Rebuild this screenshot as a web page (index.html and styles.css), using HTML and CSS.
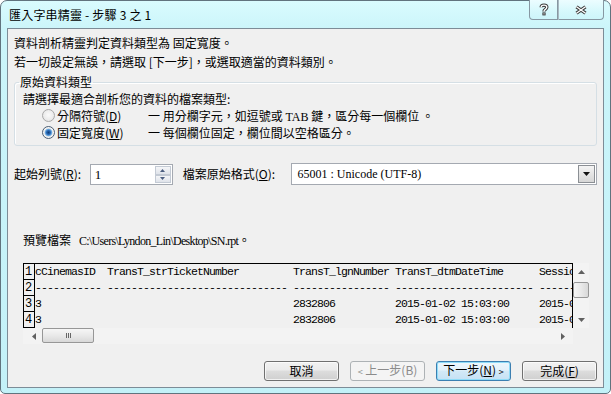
FILE: index.html
```html
<!DOCTYPE html>
<html lang="zh-Hant">
<head>
  <meta charset="UTF-8">
  <meta name="viewport" content="width=device-width, initial-scale=1.0">
  <title>匯入字串精靈 - 步驟 3 之 1</title>
  <link rel="stylesheet" href="styles.css">
</head>
<body>
  <div class="window">
    <div class="titlebar">
      <span class="title">匯入字串精靈 - 步驟 3 之 1</span>
      <div class="caption">
        <div class="cap-btn cap-help">
          <svg width="10" height="13" viewBox="0 0 10 13">
            <path class="edge" d="M2.2 4.3 C2.2 1.4 7.8 1.4 7.8 4.3 C7.8 6.4 5 6.3 5 8.4" />
            <path class="fill" d="M2.2 4.3 C2.2 1.4 7.8 1.4 7.8 4.3 C7.8 6.4 5 6.3 5 8.4" />
            <rect x="3.4" y="9.4" width="3.2" height="3" fill="#3b3b3b" />
            <rect x="4.4" y="10.4" width="1.2" height="1" fill="#fff" />
          </svg>
        </div>
        <div class="cap-btn cap-close">
          <svg width="14" height="10" viewBox="0 0 14 10">
            <path class="edge" d="M2.5 1.8 L11.5 8.2 M11.5 1.8 L2.5 8.2" />
            <path class="fill" d="M2.5 1.8 L11.5 8.2 M11.5 1.8 L2.5 8.2" />
          </svg>
        </div>
      </div>
    </div>

    <div class="client">
      <p class="line">資料剖析精靈判定資料類型為 固定寬度。</p>
      <p class="line">若一切設定無誤，請選取 [下一步]，或選取適當的資料類別。</p>

      <fieldset class="group">
        <legend>原始資料類型</legend>
        <div class="hint">請選擇最適合剖析您的資料的檔案類型:</div>
        <div class="radio-row">
          <span class="radio"></span>
          <span class="radio-label">分隔符號(<u>D</u>)</span>
          <span class="radio-desc">一 用分欄字元，如逗號或 <span class="latin">TAB</span> 鍵，區分每一個欄位 。</span>
        </div>
        <div class="radio-row">
          <span class="radio checked"></span>
          <span class="radio-label">固定寬度(<u>W</u>)</span>
          <span class="radio-desc">一 每個欄位固定，欄位間以空格區分。</span>
        </div>
      </fieldset>

      <div class="options">
        <span class="opt-label start-label">起始列號(<u>R</u>):</span>
        <div class="spinner">
          <span class="spin-value">1</span>
          <div class="spin-btns">
            <span class="spin"><svg width="5" height="3" viewBox="0 0 5 3"><polygon points="0,3 5,3 2.5,0" /></svg></span>
            <span class="spin"><svg width="5" height="3" viewBox="0 0 5 3"><polygon points="0,0 5,0 2.5,3" /></svg></span>
          </div>
        </div>
        <span class="opt-label origin-label">檔案原始格式(<u>O</u>):</span>
        <div class="combo">
          <span class="combo-value">65001 : Unicode (UTF-8)</span>
          <span class="combo-btn"><svg width="7" height="4" viewBox="0 0 7 4"><polygon points="0,0 7,0 3.5,4" /></svg></span>
        </div>
      </div>

      <div class="preview-title">預覽檔案<span class="latin path">C:\Users\Lyndon_Lin\Desktop\SN.rpt</span>。</div>

      <div class="preview">
        <div class="data">
          <div class="row"><span class="num">1</span><span class="cells">cCinemasID  TransT_strTicketNumber         TransT_lgnNumber TransT_dtmDateTime      SessionID</span></div>
          <div class="row"><span class="num">2</span><span class="cells">----------- ------------------------------ ---------------- ----------------------- ----------</span></div>
          <div class="row"><span class="num">3</span><span class="cells">3                                          2832806          2015-01-02 15:03:00     2015-01-02 15:03:00</span></div>
          <div class="row"><span class="num">4</span><span class="cells">3                                          2832806          2015-01-02 15:03:00     2015-01-02 15:03:00</span></div>
        </div>
        <div class="vscroll">
          <span class="arrow"><svg width="7" height="4" viewBox="0 0 7 4"><polygon points="0,4 7,4 3.5,0" /></svg></span>
          <span class="vthumb"></span>
          <span class="arrow arrow-end"><svg width="7" height="4" viewBox="0 0 7 4"><polygon points="0,0 7,0 3.5,4" /></svg></span>
        </div>
        <div class="hscroll">
          <span class="arrow"><svg width="4" height="7" viewBox="0 0 4 7"><polygon points="4,0 4,7 0,3.5" /></svg></span>
          <span class="hthumb"><span class="grip"></span></span>
          <span class="arrow arrow-end"><svg width="4" height="7" viewBox="0 0 4 7"><polygon points="0,0 0,7 4,3.5" /></svg></span>
        </div>
        <div class="corner"></div>
      </div>

      <div class="buttons">
        <div class="btn"><span>取消</span></div>
        <div class="btn disabled"><span><span class="chev">&lt;</span> 上一步(B)</span></div>
        <div class="btn default"><span>下一步(<u>N</u>) <span class="chev">&gt;</span></span></div>
        <div class="btn"><span>完成(<u>F</u>)</span></div>
      </div>
    </div>
  </div>
</body>
</html>
```

FILE: styles.css
```css
* {
  box-sizing: border-box;
}

body {
  margin: 0;
  background: #fff;
  font-family: "Noto Sans CJK TC", "Noto Sans", sans-serif;
  font-size: 12px;
  color: #000;
}

.window {
  width: 611px;
  height: 394px;
  padding: 0 6px;
  border: 1px solid #61737e;
  border-radius: 7px 7px 5px 5px;
  background: linear-gradient(to bottom, #d9fbfe, #cbf5fa 28px, #c3f1f8);
}

/* title bar */

.titlebar {
  display: flex;
  height: 27px;
}

.title {
  padding: 6px 0 0 2px;
  line-height: 16px;
  letter-spacing: 0.2px;
}

.caption {
  display: flex;
  height: 20px;
  margin-left: auto;
  margin-top: -1px;
}

.cap-btn {
  display: flex;
  align-items: center;
  justify-content: center;
  border: 1px solid #8797a2;
  border-top: none;
  background: linear-gradient(to bottom, #ecfdff, #d6f8fc 60%, #cdf5fa);
}

.cap-help {
  width: 29px;
  border-radius: 0 0 0 4px;
}

.cap-close {
  width: 46px;
  border-left: 1px solid #a9b8c1;
  border-radius: 0 0 4px 0;
}

.cap-btn .edge {
  fill: none;
  stroke: #3b3b3b;
  stroke-width: 3.4;
}

.cap-btn .fill {
  fill: none;
  stroke: #fff;
  stroke-width: 1.4;
}

/* client area */

.client {
  height: 360px;
  padding: 4px 6px 0;
  border: 1px solid #7d8c97;
  background: #f0f0f0;
}

.line {
  margin: 0;
  line-height: 19px;
}

.latin {
  font-family: "Liberation Serif", serif;
}

.group {
  margin: 3px 0 0;
  padding: 1px 8px 4px;
  min-inline-size: 0;
  border: 1px solid #d5dfe5;
  border-radius: 3px;
  box-shadow: inset 1px 1px 0 #fff;
}

.group legend {
  margin-left: -4px;
  padding: 0 1px;
  line-height: 16px;
}

.hint {
  line-height: 16px;
}

.radio-row {
  display: flex;
  align-items: center;
  height: 17px;
}

.radio {
  width: 13px;
  height: 13px;
  margin: 0 2px 0 19px;
  border: 1px solid #a8a8a8;
  border-radius: 50%;
  background: radial-gradient(circle at 50% 45%, #fafafa, #ececec 55%, #dedede);
}

.radio.checked {
  border-color: #4a5e74;
  background: radial-gradient(circle, #103c78 0, #2869b4 2px, #7eb8ea 3.5px, #eaeaea 4.2px, #f4f4f4 5px, #dcdcdc);
}

.radio-label {
  width: 91px;
}

/* start row / file origin */

.options {
  display: flex;
  align-items: flex-start;
  height: 22px;
  margin-top: 17px;
}

.opt-label {
  line-height: 22px;
}

.start-label {
  width: 76px;
}

.origin-label {
  width: 108px;
  margin-left: 10px;
}

.spinner {
  display: flex;
  width: 83px;
  height: 21px;
  margin-top: 1px;
  padding: 1px;
  border: 1px solid #a4a9b1;
  background: #fff;
}

.spin-value {
  flex: 1;
  padding-left: 3px;
  font-family: "Liberation Serif", serif;
  font-size: 13px;
  line-height: 17px;
}

.spin-btns {
  display: flex;
  flex-direction: column;
  width: 16px;
}

.spin {
  display: flex;
  align-items: center;
  justify-content: center;
  height: 9px;
  border: 1px solid #c3cad4;
  background: linear-gradient(to bottom, #f5f6f8, #dfe3ea);
}

.spin polygon {
  fill: #4b5e80;
}

.combo {
  display: flex;
  align-items: center;
  width: 307px;
  height: 22px;
  padding: 1px;
  border: 1px solid #a4a9b1;
  background: #fff;
}

.combo-value {
  flex: 1;
  padding-left: 5px;
  font-family: "Liberation Serif", serif;
  font-size: 12px;
}

.combo-btn {
  display: flex;
  align-items: center;
  justify-content: center;
  width: 17px;
  height: 18px;
  border: 1px solid #8b8f94;
  background: linear-gradient(to bottom, #f4f4f4, #e4e4e4 50%, #d6d6d6);
}

.combo-btn polygon {
  fill: #111;
}

/* preview */

.preview-title {
  margin-top: 47px;
  padding-left: 9px;
  line-height: 16px;
}

.preview-title .path {
  margin-left: 8px;
  font-size: 12px;
  letter-spacing: -0.7px;
}

.preview {
  display: grid;
  grid-template-columns: 550px 16px;
  grid-template-rows: 65px 16px;
  margin: 14px 0 0 9px;
}

.data {
  overflow: hidden;
  border: 1px solid #000;
  border-bottom: none;
  background: #f0f0f0;
}

.row {
  display: flex;
  height: 16px;
}

.num {
  flex: none;
  width: 11px;
  padding-left: 1px;
  border-right: 1px solid #000;
  border-bottom: 1px solid #000;
  font-family: "Liberation Mono", monospace;
  font-size: 12px;
  line-height: 16px;
}

.cells {
  overflow: hidden;
  white-space: pre;
  font-family: "Liberation Mono", monospace;
  font-size: 11.5px;
  letter-spacing: -0.9px;
  line-height: 16px;
}

.vscroll,
.hscroll {
  display: flex;
  background: #f3f3f3;
}

.vscroll {
  flex-direction: column;
  align-items: center;
}

.arrow {
  display: flex;
  align-items: center;
  justify-content: center;
  width: 16px;
  height: 17px;
}

.arrow polygon {
  fill: #606060;
}

.arrow-end {
  margin-top: auto;
}

.hscroll .arrow {
  width: 17px;
  height: 16px;
  margin-left: 2px;
}

.hscroll .arrow-end {
  margin: 0 2px 0 auto;
}

.vthumb {
  width: 16px;
  height: 16px;
  margin-top: 2px;
  border: 1px solid #979797;
  border-radius: 2px;
  background: linear-gradient(to right, #f6f6f6, #e9e9e9 50%, #d8d8d8);
}

.hthumb {
  display: flex;
  align-items: center;
  justify-content: center;
  width: 52px;
  height: 15px;
  border: 1px solid #979797;
  border-radius: 2px;
  background: linear-gradient(to bottom, #f6f6f6, #e9e9e9 50%, #d8d8d8);
}

.grip {
  width: 5px;
  height: 5px;
  background: repeating-linear-gradient(to right, #666 0 1px, transparent 1px 2px);
}

.corner {
  background: #f0f0f0;
}

/* buttons */

.buttons {
  display: flex;
  justify-content: flex-end;
  gap: 11px;
  margin-top: 17px;
}

.btn {
  display: flex;
  align-items: center;
  justify-content: center;
  width: 75px;
  height: 20px;
  border: 1px solid #707070;
  border-radius: 3px;
  background: linear-gradient(to bottom, #f2f2f2, #ebebeb 45%, #dddddd 50%, #cfcfcf);
  box-shadow: inset 0 0 0 1px rgba(255, 255, 255, 0.7);
  line-height: 16px;
}

.btn.disabled {
  border-color: #adb2b5;
  background: #f4f4f4;
  box-shadow: none;
  color: #8b8b8b;
}

.btn.default {
  border-color: #3c7fb1;
  box-shadow: inset 0 0 0 1px #8fdcf8;
  background: linear-gradient(to bottom, #eef7fc, #e3f1fa 45%, #d3e9f7 50%, #c5e1f4);
}

.chev {
  font-size: 9px;
}
```
